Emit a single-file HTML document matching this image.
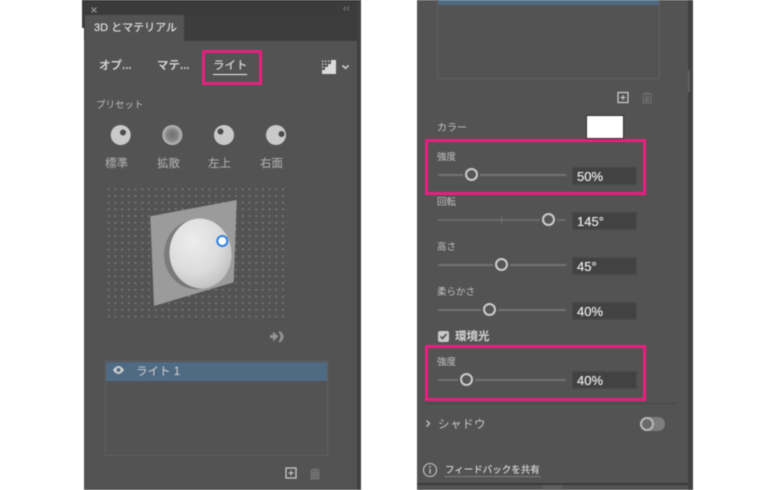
<!DOCTYPE html>
<html lang="ja">
<head>
<meta charset="utf-8">
<style>
html,body{margin:0;padding:0;width:768px;height:490px;overflow:hidden;background:#fff}
body{position:relative;font-family:"Liberation Sans","Noto Sans CJK JP",sans-serif;color:#d4d4d4}
div,span{position:absolute;white-space:nowrap;box-sizing:border-box}
svg{position:absolute;overflow:visible}
#w{left:0;top:0;width:768px;height:490px;filter:blur(.45px)}
.t{line-height:1}
.pink{border:3px solid #e81e80}
.track{height:2px;background:#727272}
.knob{width:13px;height:13px;border-radius:50%;border:2.5px solid #cdcdcd;background:#565656;box-shadow:0 0 0 2px #535353}
.inp{left:572px;width:65px;height:18px;background:#424242;border:1px solid #4a4a4a;color:#efefef;font-size:13px;line-height:18px;padding-left:4px;text-shadow:0 0 .4px #eee}
.lab{left:437px;font-size:9.5px;color:#c2c2c2;line-height:1}
</style>
</head>
<body>
<div id="w">
<!-- Left panel -->
<div style="left:84px;top:0;width:277px;height:490px;background:#535353"></div>
<div style="left:82px;top:0;width:279px;height:28px;background:#3b3b3b"></div>
<div style="left:357px;top:0;width:4px;height:490px;background:#414141"></div>
<div style="left:84px;top:15px;width:273px;height:26px;background:#3d3d3d"></div>
<div style="left:82px;top:0;width:279px;height:1px;background:#2c2c2c"></div>
<div style="left:85px;top:15px;width:99px;height:26px;background:#535353"></div>
<svg style="left:91px;top:7px" width="6" height="6" viewBox="0 0 6 6"><path d="M.5 .5l5 5M5.500 .5l-5 5" stroke="#9a9a9a" stroke-width="1.200"/></svg>
<div class="t" style="left:343px;top:4px;font-size:10px;color:#8c8c8c">‹‹</div>
<div class="t" style="left:94px;top:23px;font-size:11px;color:#e2e2e2;text-shadow:0 0 .4px #e2e2e2">3D とマテリアル</div>

<div class="t" style="left:99px;top:61px;font-size:11.500px;font-weight:bold;color:#d2d2d2">オプ...</div>
<div class="t" style="left:157px;top:61px;font-size:11.500px;font-weight:bold;color:#d2d2d2">マテ...</div>
<div class="pink" style="left:202px;top:50px;width:60px;height:35px"></div>
<div class="t" style="left:213px;top:61px;font-size:11.500px;color:#dedede;text-shadow:0 0 .4px #ddd">ライト</div>
<div style="left:213px;top:74px;width:34px;height:1px;background:#f0f0f0"></div>
<svg style="left:320px;top:58px" width="32" height="18" viewBox="0 0 32 18">
<path d="M2 16V12H5V9H8V6H11V2H16V16Z" fill="#dcdcdc"/>
<path d="M2 2.500h1.500v1.500H2zM5 2.500h1.500v1.500H5zM8 2.500h1.500v1.500H8zM2 5.500h1.500v1.500H2zM5 5.500h1.500v1.500H5zM2 8.500h1.500v1.500H2z" fill="#c4c4c4"/>
<path d="M22.500 7.500l3 2.800 3-2.800" fill="none" stroke="#cfcfcf" stroke-width="1.600"/>
</svg>

<div class="t" style="left:96px;top:101px;font-size:9.500px;color:#bdbdbd">プリセット</div>

<svg style="left:100px;top:120px" width="190" height="30" viewBox="0 0 190 30">
<defs><radialGradient id="dif"><stop offset="0" stop-color="#6f6f6f"/><stop offset=".55" stop-color="#858585"/><stop offset="1" stop-color="#bcbcbc"/></radialGradient></defs>
<circle cx="20.700" cy="15" r="10" fill="#c9c9c9"/><circle cx="23" cy="12.500" r="3" fill="#4a4a4a"/>
<circle cx="72.300" cy="15" r="10" fill="url(#dif)"/>
<circle cx="124" cy="15" r="10" fill="#c9c9c9"/><circle cx="120.500" cy="11.500" r="3" fill="#4a4a4a"/>
<circle cx="176" cy="15" r="10" fill="#c9c9c9"/><circle cx="181.500" cy="14" r="3" fill="#4a4a4a"/>
</svg>
<div class="t" style="left:105px;top:159px;font-size:11.500px;color:#b4b4b4">標準</div>
<div class="t" style="left:157px;top:159px;font-size:11.500px;color:#b4b4b4">拡散</div>
<div class="t" style="left:208px;top:159px;font-size:11.500px;color:#b4b4b4">左上</div>
<div class="t" style="left:260px;top:159px;font-size:11.500px;color:#b4b4b4">右面</div>

<!-- Dot grid and sphere -->
<svg style="left:0;top:0" width="768" height="490" viewBox="0 0 768 490">
<defs>
<pattern id="dots" x="107" y="187.500" width="6.700" height="6.700" patternUnits="userSpaceOnUse"><rect x="1" y="1" width="1.500" height="1.500" fill="#868686"/></pattern>
<radialGradient id="sph" cx=".4" cy=".32" r=".8"><stop offset="0" stop-color="#ededed"/><stop offset=".55" stop-color="#dcdcdc"/><stop offset=".85" stop-color="#c4c4c4"/><stop offset="1" stop-color="#adadad"/></radialGradient>
<linearGradient id="shd" x1="0" y1="0" x2="1" y2="0"><stop offset="0" stop-color="#7c7c7c"/><stop offset="1" stop-color="#6a6a6a"/></linearGradient>
</defs>
<rect x="107" y="187" width="180" height="132" fill="url(#dots)"/>
<path d="M150.300 216.300L236.700 200L233.700 282.300L154 306Z" fill="#9b9b9b"/>
<ellipse cx="196" cy="254.500" rx="32" ry="34.500" fill="url(#shd)"/>
<ellipse cx="200.500" cy="253.500" rx="31" ry="35" transform="rotate(-6 200.500 253.500)" fill="url(#sph)"/>
<circle cx="222.300" cy="241" r="5" fill="#fff" stroke="#2b7fe0" stroke-width="2"/>
<path d="M270 335h3v-3.500l5.500 5-5.500 5V338h-3z" fill="#949494"/>
<path d="M279 331.800a5.200 5.200 0 0 1 0 10a7 7 0 0 0 2.200-5a7 7 0 0 0-2.200-5z" fill="#949494" stroke="#949494" stroke-width="1.500"/>
</svg>

<!-- Lights list -->
<div style="left:105px;top:360px;width:223px;height:96px;border:1px solid #5f5f5f"></div>
<div style="left:106px;top:362px;width:221px;height:19px;background:#4f6a83"></div>
<svg style="left:112px;top:365px" width="13" height="10" viewBox="0 0 13 10">
<path d="M1 5C3 2 5 1 6.500 1S10 2 12 5C10 8 8 9 6.500 9S3 8 1 5Z" fill="#cfcfcf"/><circle cx="6.500" cy="5" r="2" fill="#4f6a83"/>
</svg>
<div class="t" style="left:136px;top:367px;font-size:11.500px;color:#d4d4d4">ライト 1</div>
<svg style="left:285px;top:467px" width="40" height="14" viewBox="0 0 40 14">
<rect x="1" y="1" width="10" height="10" fill="none" stroke="#d0d0d0" stroke-width="1.200"/><path d="M3.500 6h5M6 3.500v5" stroke="#d0d0d0"/>
<path d="M25 3h10M26 4v8h8V4M28 3V2h4v1" fill="#6e6e6e" stroke="#727272"/>
</svg>

<!-- Right panel -->
<div style="left:417px;top:0;width:276px;height:490px;background:#535353"></div>
<div style="left:688px;top:0;width:5px;height:490px;background:#414141"></div>
<div style="left:688px;top:70px;width:2px;height:22px;background:#5e5e5e"></div>
<div style="left:437px;top:-2px;width:223px;height:81px;border:1px solid #5f5f5f"></div>
<div style="left:438px;top:0;width:221px;height:5px;background:#4f6a83"></div>
<svg style="left:617px;top:91px" width="40" height="14" viewBox="0 0 40 14">
<rect x="1" y="1.500" width="10" height="10" fill="none" stroke="#d0d0d0" stroke-width="1.200"/><path d="M3.500 6.500h5M6 4v5" stroke="#d0d0d0"/>
<path d="M25 3h10M26 4v8h8V4M28 3V2h4v1M28.500 5v6M30 5v6M31.500 5v6" fill="none" stroke="#7a7a7a" stroke-width=".8"/>
</svg>
<div class="lab" style="top:124px;font-size:10px">カラー</div>
<div style="left:586px;top:115px;width:38px;height:24px;background:#fff;border:1px solid #2e2e2e"></div>

<div class="pink" style="left:425px;top:139px;width:221px;height:56px"></div>
<div class="lab" style="top:153px">強度</div>
<div class="track" style="left:438px;top:174px;width:128px"></div>
<div class="knob" style="left:465px;top:168px"></div>
<div class="inp" style="top:167px">50%</div>

<div class="lab" style="top:198px">回転</div>
<div class="track" style="left:438px;top:219px;width:128px;background:#6a6a6a"></div>
<div style="left:501px;top:215px;width:1px;height:9px;background:#6e6e6e"></div>
<div class="knob" style="left:542px;top:213px"></div>
<div class="inp" style="top:212px">145°</div>

<div class="lab" style="top:243px">高さ</div>
<div class="track" style="left:438px;top:264px;width:128px"></div>
<div class="knob" style="left:495px;top:258px"></div>
<div class="inp" style="top:257px">45°</div>

<div class="lab" style="top:288px">柔らかさ</div>
<div class="track" style="left:438px;top:309px;width:128px"></div>
<div class="knob" style="left:483px;top:303px"></div>
<div class="inp" style="top:302px">40%</div>

<div style="left:438px;top:331px;width:11px;height:11px;background:#c8c8c8;border-radius:2px"></div>
<svg style="left:438px;top:331px" width="11" height="11" viewBox="0 0 11 11"><path d="M2.500 5.500l2 2 4-4.500" fill="none" stroke="#444" stroke-width="1.500"/></svg>
<div class="t" style="left:455px;top:332px;font-size:11.500px;font-weight:bold;color:#d6d6d6">環境光</div>

<div class="pink" style="left:425px;top:345px;width:221px;height:56px"></div>
<div class="lab" style="top:358px">強度</div>
<div class="track" style="left:438px;top:379px;width:128px"></div>
<div class="knob" style="left:460px;top:373px"></div>
<div class="inp" style="top:371px">40%</div>

<div style="left:425px;top:403px;width:253px;height:1px;background:#474747"></div>
<svg style="left:425px;top:419px" width="8" height="10" viewBox="0 0 8 10"><path d="M1.500 1.500l3 3-3 3" fill="none" stroke="#c8c8c8" stroke-width="1.300"/></svg>
<div class="t" style="left:438px;top:420px;font-size:11.500px;color:#c8c8c8;letter-spacing:.5px">シャドウ</div>
<div style="left:640px;top:417px;width:25px;height:14px;border-radius:7px;background:#7d7d7d"></div>
<div style="left:640px;top:417px;width:14px;height:14px;border-radius:50%;background:#6a6a6a;border:2px solid #b8b8b8"></div>

<svg style="left:422px;top:462px" width="16" height="16" viewBox="0 0 16 16"><circle cx="8" cy="8" r="6.500" fill="none" stroke="#c4c4c4" stroke-width="1.100"/><path d="M8 7v4.500" stroke="#c4c4c4" stroke-width="1.400"/><circle cx="8" cy="4.800" r=".9" fill="#c4c4c4"/></svg>
<div class="t" style="left:445px;top:466px;font-size:9.500px;color:#d8d8d8;text-shadow:0 0 .4px #ddd">フィードバックを共有</div>
<div style="left:445px;top:476px;width:95px;border-top:1px dotted #aaa"></div>
<div style="left:417px;top:483px;width:271px;height:2px;background:#393939"></div>
<div style="left:543px;top:485px;width:20px;height:4px;background:repeating-linear-gradient(90deg,#6a6a6a 0 1px,transparent 1px 2px)"></div>
</div>
</body>
</html>
